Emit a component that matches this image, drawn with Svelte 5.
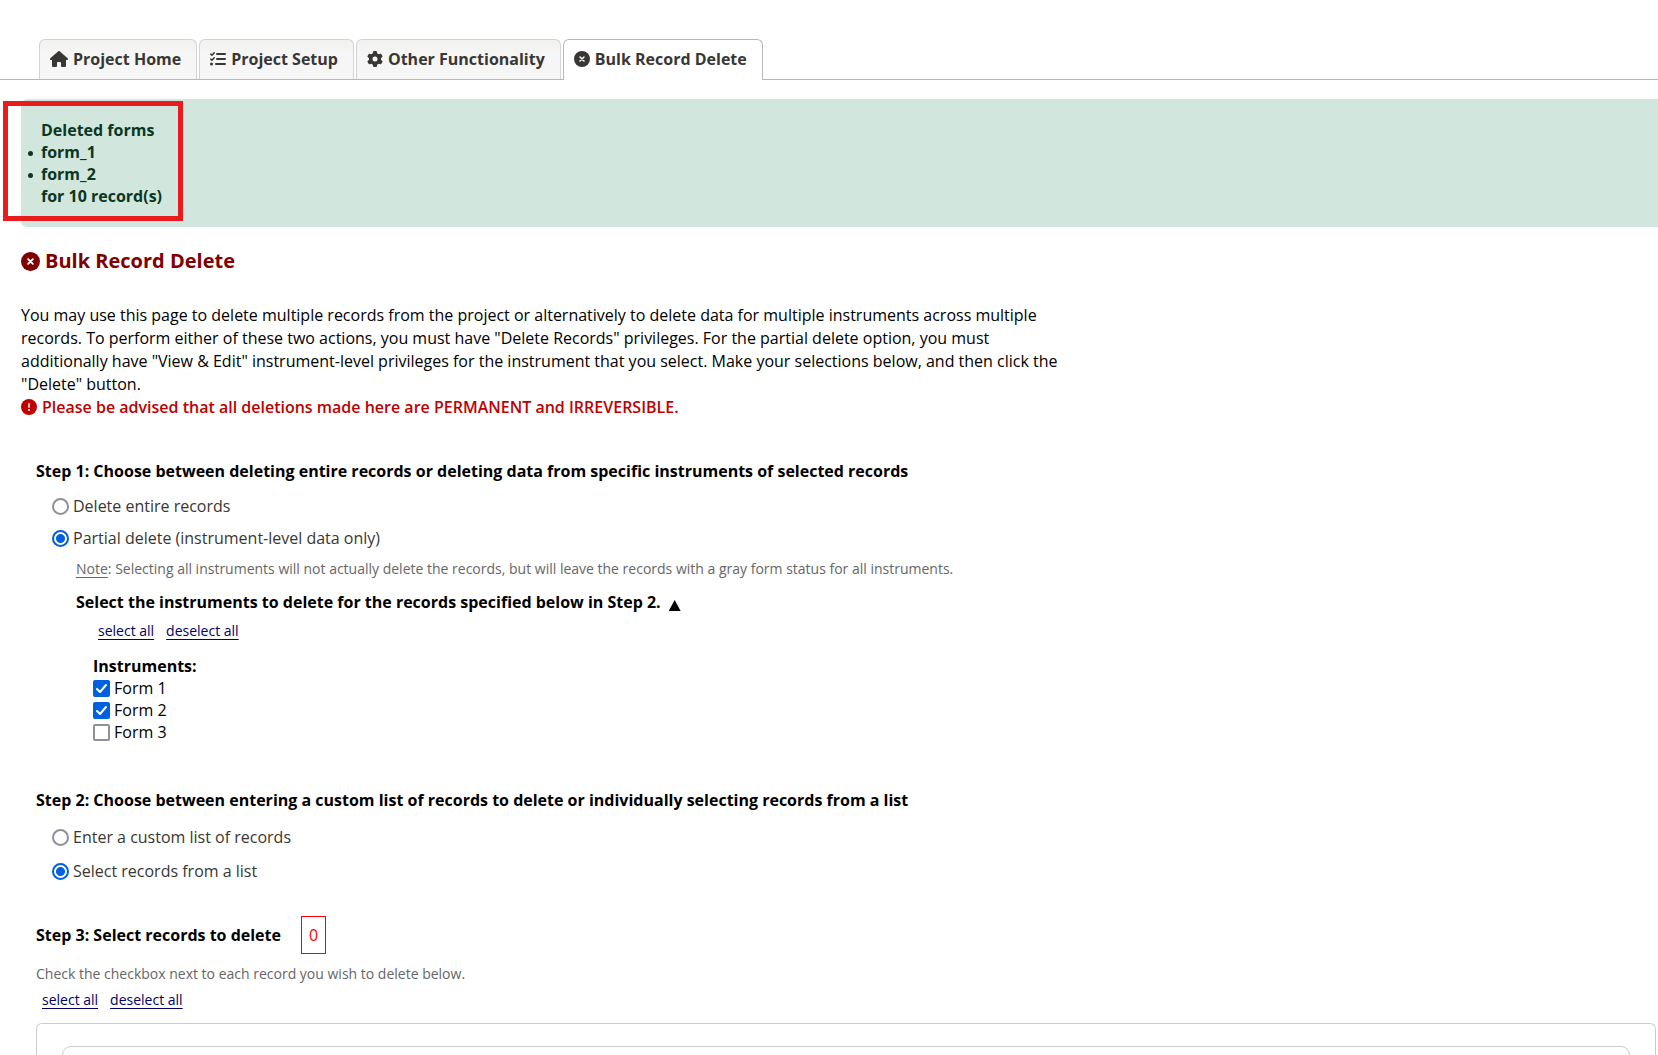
<script>
  const tabs = [
    { label: 'Project Home', icon: 'home' },
    { label: 'Project Setup', icon: 'list' },
    { label: 'Other Functionality', icon: 'gear' },
    { label: 'Bulk Record Delete', icon: 'xmark' },
  ];
  const deletedForms = ['form_1', 'form_2'];

  let activeTab = $state('Bulk Record Delete');
  let deleteMode = $state('partial');
  let recordMode = $state('list');
  let selectedCount = $state(0);
  let showInstruments = $state(true);
  let instruments = $state([
    { name: 'Form 1', checked: true },
    { name: 'Form 2', checked: true },
    { name: 'Form 3', checked: false },
  ]);

  function setAll(checked) {
    for (const i of instruments) i.checked = checked;
  }

  function stay(fn) {
    return (e) => {
      e.preventDefault();
      fn?.();
    };
  }
</script>

{#snippet icon(name)}
  {#if name === 'home'}
    <svg class="icon icon-wide" viewBox="0 0 576 512" aria-hidden="true">
      <path d="M575.8 255.5c0 18-15 32.1-32 32.1h-32l.7 160.2c0 2.7-.2 5.4-.5 8.1V472c0 22.1-17.9 40-40 40H392c-22.1 0-40-17.9-40-40v-88c0-17.7-14.3-32-32-32h-64c-17.7 0-32 14.3-32 32v88c0 22.1-17.9 40-40 40h-80c-22.1 0-40-17.9-40-40V287.6H32c-18 0-32-14-32-32.1c0-9 3-17 10-24L266.4 8c7-7 15-8 22-8s15 2 21 7L564.8 231.5c8 7 12 15 11 24z" />
    </svg>
  {:else if name === 'list'}
    <svg class="icon" viewBox="0 0 512 512" aria-hidden="true">
      <path class="line thin" d="M24 96l40 40 72-80M24 256l40 40 72-80" />
      <path class="line" d="M224 96h256M224 256h256M192 416h288" />
      <circle cx="48" cy="416" r="48" />
    </svg>
  {:else if name === 'gear'}
    <svg class="icon" viewBox="0 0 512 512" aria-hidden="true">
      <path d="M495.9 166.6c3.2 8.7 .5 18.4-6.4 24.6l-43.3 39.4c1.1 8.3 1.7 16.8 1.7 25.4s-.6 17.1-1.7 25.4l43.3 39.4c6.9 6.2 9.6 15.9 6.4 24.6c-4.4 11.9-9.7 23.3-15.8 34.3l-4.7 8.1c-6.6 11-14 21.4-22.1 31.2c-5.9 7.2-15.7 9.6-24.5 6.8l-55.7-17.7c-13.4 10.3-28.2 18.9-44 25.4l-12.5 57.1c-2 9.1-9 16.3-18.2 17.8c-13.8 2.3-28 3.5-42.5 3.5s-28.7-1.2-42.5-3.5c-9.2-1.5-16.2-8.7-18.2-17.8l-12.5-57.1c-15.8-6.5-30.6-15.1-44-25.4L83.1 425.9c-8.8 2.8-18.6 .3-24.5-6.8c-8.1-9.8-15.5-20.2-22.1-31.2l-4.7-8.1c-6.1-11-11.4-22.4-15.8-34.3c-3.2-8.7-.5-18.4 6.4-24.6l43.3-39.4C64.6 273.1 64 264.6 64 256s.6-17.1 1.7-25.4L22.4 191.2c-6.9-6.2-9.6-15.9-6.4-24.6c4.4-11.9 9.7-23.3 15.8-34.3l4.7-8.1c6.6-11 14-21.4 22.1-31.2c5.9-7.2 15.7-9.6 24.5-6.8l55.7 17.7c13.4-10.3 28.2-18.9 44-25.4l12.5-57.1c2-9.1 9-16.3 18.2-17.8C227.3 1.2 241.5 0 256 0s28.7 1.2 42.5 3.5c9.2 1.5 16.2 8.7 18.2 17.8l12.5 57.1c15.8 6.5 30.6 15.1 44 25.4l55.7-17.7c8.8-2.8 18.6-.3 24.5 6.8c8.1 9.8 15.5 20.2 22.1 31.2l4.7 8.1c6.1 11 11.4 22.4 15.8 34.3zM256 336a80 80 0 1 0 0-160 80 80 0 1 0 0 160z" />
    </svg>
  {:else if name === 'xmark'}
    <svg class="icon" viewBox="0 0 512 512" aria-hidden="true">
      <circle cx="256" cy="256" r="256" />
      <path class="cut" d="M192 192l128 128M320 192L192 320" />
    </svg>
  {:else}
    <svg class="icon" viewBox="0 0 512 512" aria-hidden="true">
      <circle cx="256" cy="256" r="256" />
      <path class="cut" d="M256 152v112" />
      <circle class="dot" cx="256" cy="352" r="32" />
    </svg>
  {/if}
{/snippet}

<div class="page">
  <nav class="tabs">
    {#each tabs as tab}
      <a
        href="#{tab.icon}"
        class="tab"
        class:active={tab.label === activeTab}
        onclick={stay(() => (activeTab = tab.label))}
      >
        {@render icon(tab.icon)}<span>{tab.label}</span>
      </a>
    {/each}
  </nav>

  <main>
    <div class="alert" role="status">
      <div>Deleted forms</div>
      <ul>
        {#each deletedForms as form}
          <li>{form}</li>
        {/each}
      </ul>
      <div>for 10 record(s)</div>
      <div class="highlight"></div>
    </div>

    <h1>{@render icon('xmark')}<span>Bulk Record Delete</span></h1>

    <p class="intro">
      You may use this page to delete multiple records from the project or alternatively to delete data
      for multiple instruments across multiple records. To perform either of these two actions, you must
      have "Delete Records" privileges. For the partial delete option, you must additionally have "View
      &amp; Edit" instrument-level privileges for the instrument that you select. Make your selections
      below, and then click the "Delete" button.
    </p>
    <p class="warning">
      {@render icon('alert')}<span>Please be advised that all deletions made here are PERMANENT and IRREVERSIBLE.</span>
    </p>

    <div class="steps">
      <section>
        <h2>Step 1: Choose between deleting entire records or deleting data from specific instruments of selected records</h2>
        <div class="options">
          <label class="choice">
            <input type="radio" name="delete-mode" value="entire" bind:group={deleteMode} />
            Delete entire records
          </label>
          <label class="choice">
            <input type="radio" name="delete-mode" value="partial" bind:group={deleteMode} />
            Partial delete (instrument-level data only)
          </label>
        </div>

        {#if deleteMode === 'partial'}
          <div class="partial">
            <p class="note"><u>Note</u>: Selecting all instruments will not actually delete the records, but will leave the records with a gray form status for all instruments.</p>
            <div class="instr-head">
              <h3>Select the instruments to delete for the records specified below in Step 2.</h3>
              <button
                class="toggle"
                class:closed={!showInstruments}
                aria-label="Toggle instruments"
                onclick={() => (showInstruments = !showInstruments)}
              ></button>
            </div>
            {#if showInstruments}
              <div class="links instr-links">
                <a href="#all" onclick={stay(() => setAll(true))}>select all</a>
                <a href="#none" onclick={stay(() => setAll(false))}>deselect all</a>
              </div>
              <fieldset>
                <legend>Instruments:</legend>
                {#each instruments as inst}
                  <label class="check">
                    <input type="checkbox" bind:checked={inst.checked} />
                    {inst.name}
                  </label>
                {/each}
              </fieldset>
            {/if}
          </div>
        {/if}
      </section>

      <section class="step2">
        <h2>Step 2: Choose between entering a custom list of records to delete or individually selecting records from a list</h2>
        <div class="options roomy">
          <label class="choice">
            <input type="radio" name="record-mode" value="custom" bind:group={recordMode} />
            Enter a custom list of records
          </label>
          <label class="choice">
            <input type="radio" name="record-mode" value="list" bind:group={recordMode} />
            Select records from a list
          </label>
        </div>
      </section>

      <section class="step3">
        <div class="step3-head">
          <h2>Step 3: Select records to delete</h2>
          <output class="count">{selectedCount}</output>
        </div>
        <p class="hint">Check the checkbox next to each record you wish to delete below.</p>
        <div class="links">
          <a href="#all-records" onclick={stay()}>select all</a>
          <a href="#no-records" onclick={stay()}>deselect all</a>
        </div>
        <div class="records">
          <div class="records-inner"></div>
        </div>
      </section>
    </div>
  </main>
</div>

<style>
  :global(body) { margin: 0; background: #fff; }

  .page {
    display: flex; flex-direction: column; min-height: 100vh; box-sizing: border-box;
    padding-top: 39px;
    font-family: "Open Sans", "Noto Sans", sans-serif; font-size: 16px; line-height: 22px;
    color: #000;
  }
  h1, h2, h3, p, ul, fieldset { margin: 0; padding: 0; }
  h2, h3 { font-size: 16px; font-weight: 700; }

  .icon { flex: none; width: 16px; height: 16px; fill: currentColor; }
  .icon-wide { width: 18px; }
  .line { fill: none; stroke: currentColor; stroke-width: 64; stroke-linecap: round; }
  .thin { stroke-width: 48; stroke-linejoin: round; }
  .cut { fill: none; stroke: #fff; stroke-width: 48; stroke-linecap: round; }
  .dot { fill: #fff; }

  /* tabs */
  .tabs {
    display: flex; gap: 2px; padding-left: 39px;
    border-bottom: 1px solid #b8b8b8;
  }
  .tab {
    display: flex; align-items: center; gap: 5px; box-sizing: border-box;
    height: 40px; padding: 0 15px 2px 10px;
    border: 1px solid #d3d3d3; border-width: 1px 1px 0; border-radius: 6px 6px 0 0;
    background: linear-gradient(#f1f1ef, #f6f6f6 40%);
    color: #393733; font-weight: 700; text-decoration: none;
  }
  .tab.active {
    height: 41px; margin-bottom: -1px; padding-bottom: 3px;
    border-color: #b8b8b8; background: #fff;
  }

  main { display: flex; flex-direction: column; flex: 1; padding: 19px 0 0 21px; }

  .alert {
    position: relative; padding: 20px;
    border-radius: 6px 0 0 6px;
    background: #d1e7dd; color: #0a3622; font-weight: 700;
  }
  .alert ul { list-style: none; }
  .alert li { display: flex; align-items: center; }
  .alert li::before {
    content: ''; width: 5px; height: 5px; margin: 2px 8px 0 -13px;
    border-radius: 50%; background: currentColor;
  }
  .highlight {
    position: absolute; top: 2px; left: -18px; box-sizing: border-box;
    width: 180px; height: 120px;
    border: 5px solid #e81c1c;
  }

  h1 {
    display: flex; align-items: center; gap: 5px; margin-top: 20px;
    font-size: 20px; line-height: 28px; font-weight: 700; color: #800000;
  }
  h1 :global(.icon) { width: 19px; height: 19px; }

  .intro { max-width: 1050px; margin-top: 29px; line-height: 23px; }
  .warning {
    display: flex; align-items: center; gap: 5px;
    font-weight: 600; color: #c00000;
  }

  .steps { display: flex; flex-direction: column; flex: 1; padding: 42px 2px 0 15px; }

  /* form controls */
  input {
    flex: none; appearance: none; box-sizing: border-box;
    width: 17px; height: 17px; margin: 0;
    border: 2px solid #8f8f9d; background: #fff;
  }
  input[type='radio'] { border-radius: 50%; }
  input[type='radio']:checked {
    border-color: #0060df;
    background: radial-gradient(circle, #0060df 4px, #fff 5px);
  }
  input[type='checkbox'] { border-radius: 2px; }
  input[type='checkbox']:checked {
    border-color: #0060df;
    background: #0060df url("data:image/svg+xml,%3Csvg xmlns='http://www.w3.org/2000/svg' viewBox='0 0 13 13'%3E%3Cpath d='M2 7l3 3 6-7' fill='none' stroke='%23fff' stroke-width='2' stroke-linecap='round' stroke-linejoin='round'/%3E%3C/svg%3E") center / 13px 13px no-repeat;
  }

  .options { display: flex; flex-direction: column; gap: 10px; padding: 13px 0 0 16px; }
  .options.roomy { gap: 12px; padding-top: 15px; }
  .choice { display: flex; align-items: center; gap: 4px; color: #393733; }

  .partial { padding-left: 40px; }
  .note { margin-top: 9px; font-size: 14px; color: #666; }
  u { text-underline-offset: 3px; }
  .instr-head { display: flex; align-items: center; gap: 8px; margin-top: 11px; }
  .toggle {
    width: 12px; height: 11px; margin-top: 7px; padding: 0; border: 0;
    background: #000; clip-path: polygon(50% 0, 100% 100%, 0 100%); cursor: pointer;
  }
  .toggle.closed { clip-path: polygon(0 0, 100% 0, 50% 100%); }

  .links { display: flex; gap: 12px; margin-top: 4px; padding-left: 6px; font-size: 14px; }
  .links a { color: #000066; text-underline-offset: 3px; }
  .instr-links { margin-top: 7px; padding-left: 22px; }

  fieldset { margin: 13px 0 0 17px; border: 0; min-width: 0; }
  legend { padding: 0; font-weight: 700; }
  .check { display: flex; align-items: center; gap: 4px; }

  .step2 { margin-top: 46px; }

  .step3 { display: flex; flex-direction: column; flex: 1; margin-top: 34px; }
  .step3-head { display: flex; align-items: center; gap: 20px; }
  .count { padding: 7px; border: 1px solid #f00; color: #f00; }
  .hint { margin-top: 9px; font-size: 14px; color: #666; }

  .records {
    display: flex; flex: 1; margin-top: 12px; padding: 22px 25px 0;
    border: 1px solid #ccc; border-bottom: 0; border-radius: 6px 6px 0 0;
  }
  .records-inner {
    flex: 1; border: 1px solid #ccc; border-bottom: 0; border-radius: 10px 10px 0 0;
  }
</style>
